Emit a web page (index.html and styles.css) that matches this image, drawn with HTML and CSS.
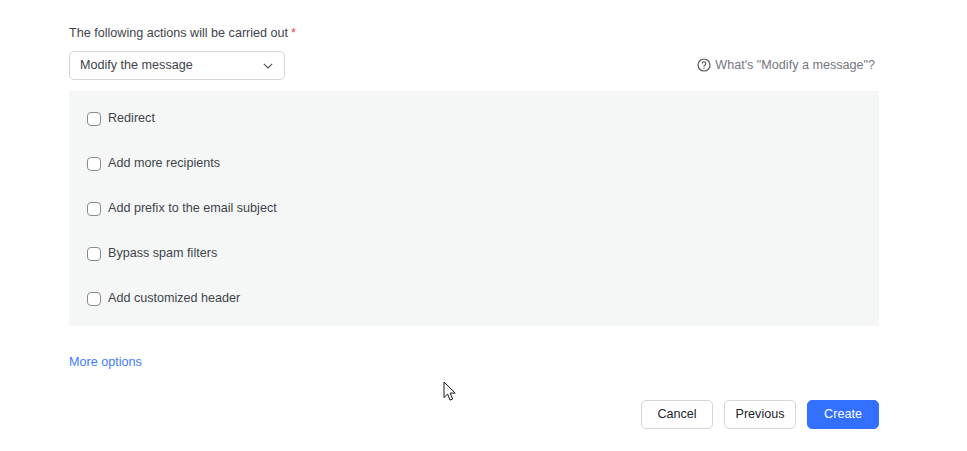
FILE: index.html
```html
<!DOCTYPE html>
<html lang="en">
<head>
<meta charset="utf-8">
<title>Actions</title>
<link rel="stylesheet" href="styles.css">
</head>
<body>
<main class="page">
  <div class="label">The following actions will be carried out<span class="req">*</span></div>
  <div class="select-row">
    <div class="select">
      <span>Modify the message</span>
      <svg class="chev" width="10" height="6" viewBox="0 0 10 6"><path d="M.8.8 5 5 9.2.8" fill="none" stroke="#4a4f5a" stroke-width="1.1"/></svg>
    </div>
    <a class="help">
      <svg width="14" height="14" viewBox="0 0 14 14"><circle cx="7" cy="7" r="6" fill="none" stroke="#55585f" stroke-width="1.2"/><path d="M5.2 5.6a1.8 1.8 0 1 1 2.8 1.5c-.7.4-1 .7-1 1.4" fill="none" stroke="#55585f" stroke-width="1.1"/><circle cx="7" cy="10.3" r=".7" fill="#55585f"/></svg>
      <span>What's "Modify a message"?</span>
    </a>
  </div>
  <div class="panel">
    <label class="row"><span class="box"></span><span>Redirect</span></label>
    <label class="row"><span class="box"></span><span>Add more recipients</span></label>
    <label class="row"><span class="box"></span><span>Add prefix to the email subject</span></label>
    <label class="row"><span class="box"></span><span>Bypass spam filters</span></label>
    <label class="row"><span class="box"></span><span>Add customized header</span></label>
  </div>
  <a class="more">More options</a>
  <div class="actions">
    <button class="btn">Cancel</button>
    <button class="btn">Previous</button>
    <button class="btn primary">Create</button>
  </div>
</main>
<svg class="cursor" width="14" height="21" viewBox="0 0 14 21"><path d="M1 1v15.5l3.6-3.4 2.5 6 2.6-1.1-2.6-5.9H12.2z" fill="#fff" stroke="#16181d" stroke-width="1"/></svg>
</body>
</html>
```
FILE: styles.css
```css
html, body { margin: 0; padding: 0; background: #fff; }
body {
  width: 967px;
  height: 451px;
  overflow: hidden;
  position: relative;
  font-family: "Liberation Sans", Arial, sans-serif;
  font-size: 12.6px;
  color: #41444b;
}
.page {
  width: 810px;
  margin-left: 69px;
  padding-top: 25px;
}
.label { height: 16px; line-height: 16px; color: #41444b; }
.req { color: #e5484d; margin-left: 3px; }
.select-row {
  display: flex;
  justify-content: space-between;
  align-items: center;
  margin-top: 10px;
}
.select {
  box-sizing: border-box;
  width: 216px;
  height: 29px;
  border: 1px solid #d3d5d9;
  border-radius: 5px;
  padding: 0 11px 2px 10px;
  display: flex;
  align-items: center;
  justify-content: space-between;
  color: #41444b;
}
.chev { margin-top: 2px; }
.help {
  display: flex;
  align-items: center;
  gap: 4px;
  color: #74777f;
  padding-right: 4px;
  padding-bottom: 2px;
}
.panel {
  margin-top: 11px;
  background: #f5f7f7;
  height: 235px;
  box-sizing: border-box;
  padding: 4px 18px;
  display: flex;
  flex-direction: column;
}
.row {
  height: 45px;
  display: flex;
  align-items: center;
  gap: 7px;
  color: #41444b;
}
.box {
  box-sizing: border-box;
  width: 14px;
  height: 14px;
  margin-top: 2px;
  border: 1px solid #868a92;
  border-radius: 4px;
  background: #fff;
}
.more {
  display: block;
  margin-top: 28px;
  height: 16px;
  line-height: 16px;
  color: #3f7bff;
}
.actions {
  display: flex;
  justify-content: flex-end;
  gap: 11px;
  margin-top: 30px;
}
.btn {
  box-sizing: border-box;
  width: 72px;
  height: 29px;
  border: 1px solid #d3d5d9;
  border-radius: 5px;
  background: #fff;
  color: #22252b;
  font: 12.6px "Liberation Sans", Arial, sans-serif;
  padding: 0 0 2px;
}
.primary {
  background: #3370ff;
  border-color: #3370ff;
  color: #fff;
}
.cursor { position: absolute; left: 443px; top: 381px; }
```
